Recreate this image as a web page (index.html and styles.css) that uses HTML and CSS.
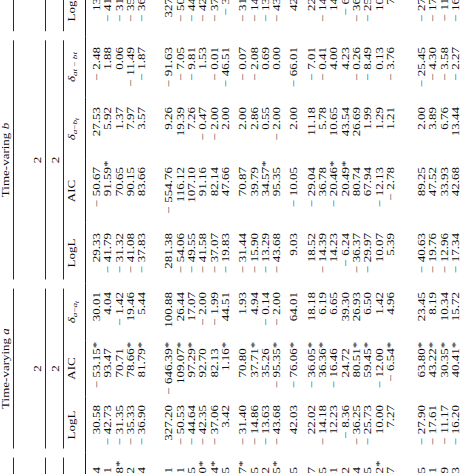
FILE: index.html
```html
<!DOCTYPE html>
<html>
<head>
<meta charset="utf-8">
<title>Time-varying models</title>
<link rel="stylesheet" href="styles.css">
</head>
<body>
<div class="stage">
<table class="tbl">
<colgroup>
<col class="w0"><col class="wa"><col class="wa2"><col class="wa"><col class="wb"><col class="wb"><col class="wb"><col class="wb"><col class="wc">
</colgroup>
<thead>
<tr class="ra">
<th><div class="rule open-l">&nbsp;</div></th>
<th colspan="3"><div class="rule">Time-varying <span class="it">a</span></div></th>
<th colspan="4"><div class="rule">Time-varing <span class="it">b</span></div></th>
<th><div class="rule open-r">&nbsp;</div></th>
</tr>
<tr class="rb">
<th><div class="rule open-l">&nbsp;</div></th>
<th colspan="3"><div class="rule">2</div></th>
<th colspan="4"><div class="rule">2</div></th>
<th><div class="rule open-r">&nbsp;</div></th>
</tr>
<tr class="rc">
<th><div class="rule open-l">&nbsp;</div></th>
<th colspan="3"><div class="rule">2</div></th>
<th colspan="4"><div class="rule">2</div></th>
<th><div class="rule open-r">&nbsp;</div></th>
</tr>
<tr class="rd">
<th>&nbsp;</th>
<th>LogL</th>
<th>AIC</th>
<th><span class="it">δ</span><span class="sb"><span class="it">a</span>−<span class="it">a</span><span class="sb2"><span class="it">t</span></span></span></th>
<th>LogL</th>
<th>AIC</th>
<th><span class="it">δ</span><span class="sb"><span class="it">a</span>−<span class="it">b</span><span class="sb2"><span class="it">t</span></span></span></th>
<th><span class="it">δ</span><span class="sb"><span class="it">at</span> − <span class="it">bt</span></span></th>
<th>LogL</th>
</tr>
</thead>
<tbody>
<tr class="first"><td>− 53.14</td><td>30.58</td><td>− 53.15<span class="s">*</span></td><td>30.01</td><td>29.33</td><td>− 50.67</td><td>27.53</td><td>− 2.48</td><td>13.05</td></tr>
<tr><td>93.51</td><td>− 42.73</td><td>93.47</td><td>4.04</td><td>− 41.79</td><td>91.59<span class="s">*</span></td><td>5.92</td><td>1.88</td><td>− 41.92</td></tr>
<tr><td>70.38<span class="s">*</span></td><td>− 31.35</td><td>70.71</td><td>− 1.42</td><td>− 31.32</td><td>70.65</td><td>1.37</td><td>0.06</td><td>− 31.27</td></tr>
<tr><td>78.82</td><td>− 35.33</td><td>78.66<span class="s">*</span></td><td>19.46</td><td>− 41.08</td><td>90.15</td><td>7.97</td><td>− 11.49</td><td>− 35.60</td></tr>
<tr><td>81.74</td><td>− 36.90</td><td>81.79<span class="s">*</span></td><td>5.44</td><td>− 37.83</td><td>83.66</td><td>3.57</td><td>− 1.87</td><td>− 36.84</td></tr>
<tr class="g1"><td>− 646.11</td><td>327.20</td><td>− 646.39<span class="s">*</span></td><td>100.88</td><td>281.38</td><td>− 554.76</td><td>9.26</td><td>− 91.63</td><td>327.15</td></tr>
<tr><td>109.01</td><td>− 50.53</td><td>109.07<span class="s">*</span></td><td>26.44</td><td>− 54.06</td><td>116.12</td><td>19.39</td><td>− 7.05</td><td>− 50.48</td></tr>
<tr><td>97.15</td><td>− 44.64</td><td>97.29<span class="s">*</span></td><td>17.07</td><td>− 49.55</td><td>107.10</td><td>7.26</td><td>− 9.81</td><td>− 44.58</td></tr>
<tr><td>92.60<span class="s">*</span></td><td>− 42.35</td><td>92.70</td><td>− 2.00</td><td>− 41.58</td><td>91.16</td><td>− 0.47</td><td>1.53</td><td>− 42.30</td></tr>
<tr><td>82.04<span class="s">*</span></td><td>− 37.06</td><td>82.13</td><td>− 1.99</td><td>− 37.07</td><td>82.14</td><td>− 2.00</td><td>− 0.01</td><td>− 37.02</td></tr>
<tr><td>1.25</td><td>3.42</td><td>1.16<span class="s">*</span></td><td>44.51</td><td>− 19.83</td><td>47.66</td><td>2.00</td><td>− 46.51</td><td>− 3.75</td></tr>
<tr class="g2"><td>70.77<span class="s">*</span></td><td>− 31.40</td><td>70.80</td><td>1.93</td><td>− 31.44</td><td>70.87</td><td>2.00</td><td>− 0.07</td><td>− 31.38</td></tr>
<tr><td>37.65</td><td>− 14.86</td><td>37.71<span class="s">*</span></td><td>4.94</td><td>− 15.90</td><td>39.79</td><td>2.86</td><td>− 2.08</td><td>− 14.80</td></tr>
<tr><td>35.12</td><td>− 13.63</td><td>35.26</td><td>− 0.14</td><td>− 13.29</td><td>34.57<span class="s">*</span></td><td>0.55</td><td>0.69</td><td>− 13.59</td></tr>
<tr><td>95.45<span class="s">*</span></td><td>− 43.68</td><td>− 95.35<span class="s">*</span></td><td>− 2.00</td><td>− 43.68</td><td>95.35</td><td>− 2.00</td><td>0.00</td><td>− 43.62</td></tr>
<tr class="g2"><td>− 76.15</td><td>42.03</td><td>− 76.06<span class="s">*</span></td><td>64.01</td><td>9.03</td><td>− 10.05</td><td>2.00</td><td>− 66.01</td><td>42.10</td></tr>
<tr class="g3"><td>− 36.17</td><td>22.02</td><td>− 36.05<span class="s">*</span></td><td>18.18</td><td>18.52</td><td>− 29.04</td><td>11.18</td><td>− 7.01</td><td>22.07</td></tr>
<tr><td>36.25</td><td>− 14.18</td><td>36.36<span class="s">*</span></td><td>6.19</td><td>− 14.39</td><td>36.78</td><td>5.78</td><td>− 0.41</td><td>− 14.12</td></tr>
<tr><td>− 16.41</td><td>12.23</td><td>− 16.46</td><td>6.65</td><td>14.23</td><td>− 20.46<span class="s">*</span></td><td>10.65</td><td>4.00</td><td>14.30</td></tr>
<tr><td>24.62</td><td>− 8.36</td><td>24.72</td><td>39.30</td><td>− 6.24</td><td>20.49<span class="s">*</span></td><td>43.54</td><td>4.23</td><td>− 6.28</td></tr>
<tr><td>80.44</td><td>− 36.25</td><td>80.51<span class="s">*</span></td><td>26.93</td><td>− 36.37</td><td>80.74</td><td>26.69</td><td>− 0.26</td><td>− 36.19</td></tr>
<tr><td>59.35</td><td>− 25.73</td><td>59.45<span class="s">*</span></td><td>6.50</td><td>− 29.97</td><td>67.94</td><td>1.99</td><td>− 8.49</td><td>− 25.66</td></tr>
<tr><td>− 12.12<span class="s">*</span></td><td>10.00</td><td>− 12.00</td><td>1.42</td><td>10.07</td><td>− 12.13</td><td>1.29</td><td>0.13</td><td>10.04</td></tr>
<tr><td>− 6.47</td><td>7.27</td><td>− 6.54<span class="s">*</span></td><td>4.96</td><td>5.39</td><td>− 2.78</td><td>1.21</td><td>− 3.76</td><td>7.31</td></tr>
<tr class="g4"><td>63.75</td><td>− 27.90</td><td>63.80<span class="s">*</span></td><td>23.45</td><td>− 40.63</td><td>89.25</td><td>2.00</td><td>− 25.45</td><td>− 27.85</td></tr>
<tr><td>43.11</td><td>− 17.61</td><td>43.22<span class="s">*</span></td><td>8.19</td><td>− 19.76</td><td>47.52</td><td>3.89</td><td>− 4.30</td><td>− 17.57</td></tr>
<tr><td>30.29</td><td>− 11.17</td><td>30.35<span class="s">*</span></td><td>10.34</td><td>− 12.96</td><td>33.93</td><td>6.76</td><td>− 3.58</td><td>− 11.12</td></tr>
<tr><td>40.33</td><td>− 16.20</td><td>40.41<span class="s">*</span></td><td>15.72</td><td>− 17.34</td><td>42.68</td><td>13.44</td><td>− 2.27</td><td>− 16.15</td></tr>
</tbody>
</table>
</div>
</body>
</html>
```
FILE: styles.css
```css
html, body {
  margin: 0;
  padding: 0;
  background: #ffffff;
  overflow: hidden;
}

body {
  width: 474px;
  height: 474px;
  font-family: "Liberation Serif", "Times New Roman", serif;
  color: #0c0c0c;
}

/* the whole table is printed sideways (reading bottom to top),
   and the scan is stretched along the text direction */
.stage {
  width: 417px;
  transform-origin: 0 0;
  transform: translate(0, 520px) rotate(-90deg) scaleX(1.3);
}

.tbl {
  border-collapse: separate;
  border-spacing: 0;
  table-layout: fixed;
  width: 417px;
  font-size: 10px;
}

.w0 { width: 51.5px; }
.wa { width: 43.1px; }
.wa2 { width: 43.8px; }
.wb { width: 47.7px; }
.wc { width: 44.6px; }

.tbl th {
  font-weight: normal;
  padding: 0;
  text-align: center;
  white-space: nowrap;
}

.rule {
  border-bottom: 1px solid #2a2a2a;
  margin: 0 3.8px;
  line-height: 11px;
}

.open-l { margin-left: 0; }
.open-r { margin-right: 0; }

.ra .rule { padding-bottom: 2px; }
.rb .rule { padding-top: 18px; padding-bottom: 2px; }
.rc .rule { padding-top: 4px; padding-bottom: 2px; }

.rd th {
  padding: 2px 0 8px;
  line-height: 11px;
  border-bottom: 1.5px solid #1a1a1a;
}

.it { font-style: italic; }

.sb {
  font-size: 7px;
  line-height: 0;
  vertical-align: -2px;
}

.sb2 {
  font-size: 5.5px;
  line-height: 0;
  vertical-align: -1.5px;
}

.tbl td {
  padding: 0;
  line-height: 11.3px;
  text-align: right;
  white-space: nowrap;
}

.tbl td:nth-child(1) { padding-right: 10.8px; }
.tbl td:nth-child(2),
.tbl td:nth-child(3),
.tbl td:nth-child(4) { padding-right: 6.2px; }
.tbl td:nth-child(5) { padding-right: 8.5px; }
.tbl td:nth-child(6) { padding-right: 5.4px; }
.tbl td:nth-child(7) { padding-right: 6.9px; }
.tbl td:nth-child(8) { padding-right: 8.5px; }
.tbl td:nth-child(9) { padding-right: 3px; }

.s { margin-right: -5px; }

.first td { padding-top: 5px; }
.g1 td { padding-top: 16px; }
.g2 td { padding-top: 6px; }
.g3 td { padding-top: 6px; }
.g4 td { padding-top: 20px; }
```
